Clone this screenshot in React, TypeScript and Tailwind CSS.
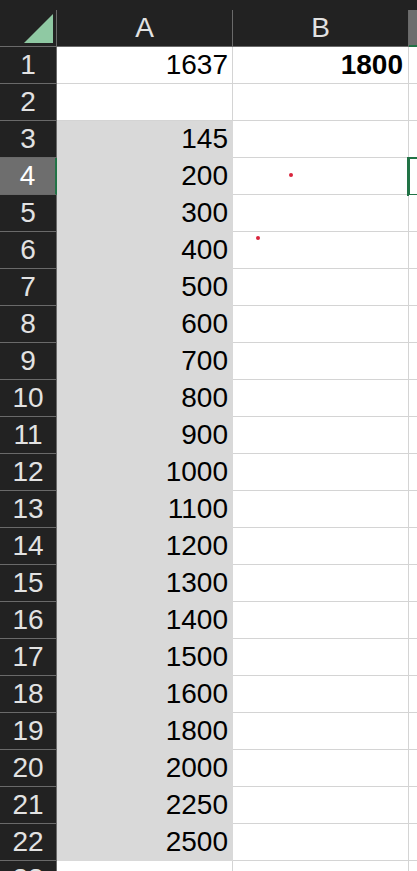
const colA: (number | null)[] = [
  1637, null, 145, 200, 300, 400, 500, 600, 700, 800, 900, 1000, 1100, 1200,
  1300, 1400, 1500, 1600, 1800, 2000, 2250, 2500, null,
];

const font = { fontFamily: '"Liberation Sans", Arial, sans-serif' };

const headerCell =
  "flex items-center justify-center h-[37px] border-r border-b border-[#6a6a6a] bg-[#222222] text-[28px] text-[#e2e2e2]";

const Sheet = () => {
  return (
    <div className="relative h-[871px] w-[417px] overflow-hidden bg-white" style={font}>
      {/* strip above the column headers */}
      <div className="h-[10px] bg-[#222222]" />

      <div className="grid grid-cols-[57px_176px_176px_1fr]">
        {/* column headers */}
        <div className="relative h-[37px] border-r border-b border-[#6a6a6a] bg-[#222222]">
          <div className="absolute right-[3px] bottom-[3px] h-[29px] w-[29px] bg-[#8fc9a3] [clip-path:polygon(100%_0,100%_100%,0_100%)]" />
        </div>
        <div className={headerCell}>A</div>
        <div className={headerCell}>B</div>
        <div className="h-[37px] border-b-2 border-[#217346] bg-[#6d6d6d]" />

        {colA.map((v, i) => {
          const row = i + 1;
          const shaded = row >= 3 && row <= 22;
          const active = row === 4;
          return (
            <div key={row} className="contents">
              <div
                className={
                  active
                    ? "flex items-center justify-center h-[37px] border-r-2 border-b border-r-[#217346] border-b-[#6a6a6a] bg-[#6e6e6e] text-[28px] text-white"
                    : headerCell
                }
              >
                {row}
              </div>
              <div
                className={
                  shaded
                    ? "flex items-center justify-end h-[37px] pr-[4px] border-r border-b border-[#d9d9d9] bg-[#d9d9d9] text-[28px] text-black"
                    : "flex items-center justify-end h-[37px] pr-[4px] border-r border-b border-[#d4d4d4] bg-white text-[28px] text-black"
                }
              >
                {v}
              </div>
              <div className="flex items-center justify-end h-[37px] pr-[5px] border-r border-b border-[#d4d4d4] bg-white text-[28px] font-bold text-black">
                {row === 1 ? 1800 : null}
              </div>
              <div className="relative h-[37px] border-b border-[#d4d4d4] bg-white">
                {active && (
                  <div className="absolute -top-[1px] -left-[2px] -right-[4px] -bottom-[2px] border-2 border-l-[3px] border-[#217346]" />
                )}
              </div>
            </div>
          );
        })}
      </div>

      {/* stray red marks */}
      <div className="absolute left-[289px] top-[173px] h-[4px] w-[4px] rounded-full bg-[#d9243c]" />
      <div className="absolute left-[256px] top-[236px] h-[4px] w-[4px] rounded-full bg-[#d9243c]" />
    </div>
  );
};

export default function App() {
  return <Sheet />;
}
